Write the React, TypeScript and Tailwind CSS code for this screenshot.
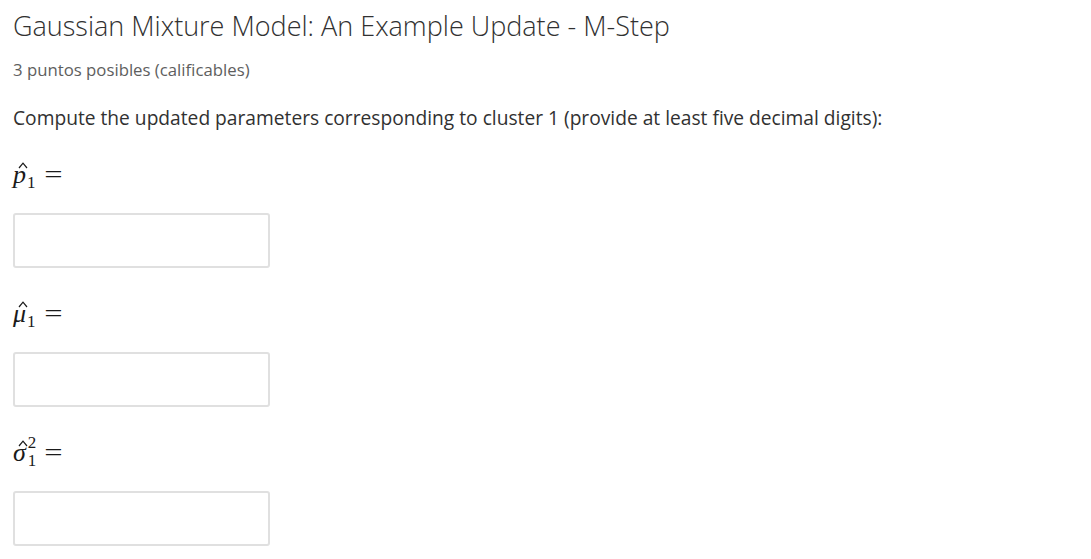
function Hat() {
  return (
    <svg className="absolute left-[5px] top-0" width="10" height="7" viewBox="0 0 10 7" fill="none">
      <path d="M1 6 L5 1.2 L9 6" stroke="#1a1a1a" strokeWidth="1.2" />
    </svg>
  );
}

function MathLabel({ base, sup }: { base: string; sup?: string }) {
  return (
    <div className="flex items-baseline h-[40px] leading-[40px] text-[26px] text-[#1a1a1a]" style={{ fontFamily: '"Liberation Serif", "DejaVu Serif", serif' }}>
      <span className="relative inline-block italic leading-none">
        {base}
        <Hat />
      </span>
      <span className={sup ? "relative -top-[13px] inline-flex flex-col text-[17px] leading-[18px] ml-[2px]" : "relative top-[5px] inline-flex flex-col text-[17px] leading-[18px] ml-[1px]"}>
        {sup && <span>{sup}</span>}
        <span>1</span>
      </span>
      <span className="ml-[10px] inline-block scale-x-[1.25]">=</span>
    </div>
  );
}

export default function App() {
  const fields = [
    { id: "p", base: "p" },
    { id: "mu", base: "μ" },
    { id: "sigma", base: "σ", sup: "2" },
  ];
  return (
    <div className="bg-white min-h-[559px] px-[13px] pt-[8px] text-[#313131]" style={{ fontFamily: '"Open Sans", sans-serif' }}>
      <h1 className="text-[27px] font-light leading-[36px] text-[#313131]">
        Gaussian Mixture Model: An Example Update - M-Step
      </h1>
      <div className="mt-[15px] text-[16.75px] leading-[22px] text-[#5e5e5e]">3 puntos posibles (calificables)</div>
      <p className="mt-[24px] text-[19.2px] leading-[26px]">
        Compute the updated parameters corresponding to cluster 1 (provide at least five decimal digits):
      </p>
      <div className="mt-[24px] flex flex-col gap-[26px]">
        {fields.map((f) => (
          <div key={f.id}>
            <MathLabel base={f.base} sup={f.sup} />
            <input
              type="text"
              aria-label={f.id}
              className="mt-[18px] block w-[257px] h-[55px] rounded-[3px] border-2 border-[#e0e0e0] bg-white outline-none"
            />
          </div>
        ))}
      </div>
    </div>
  );
}
